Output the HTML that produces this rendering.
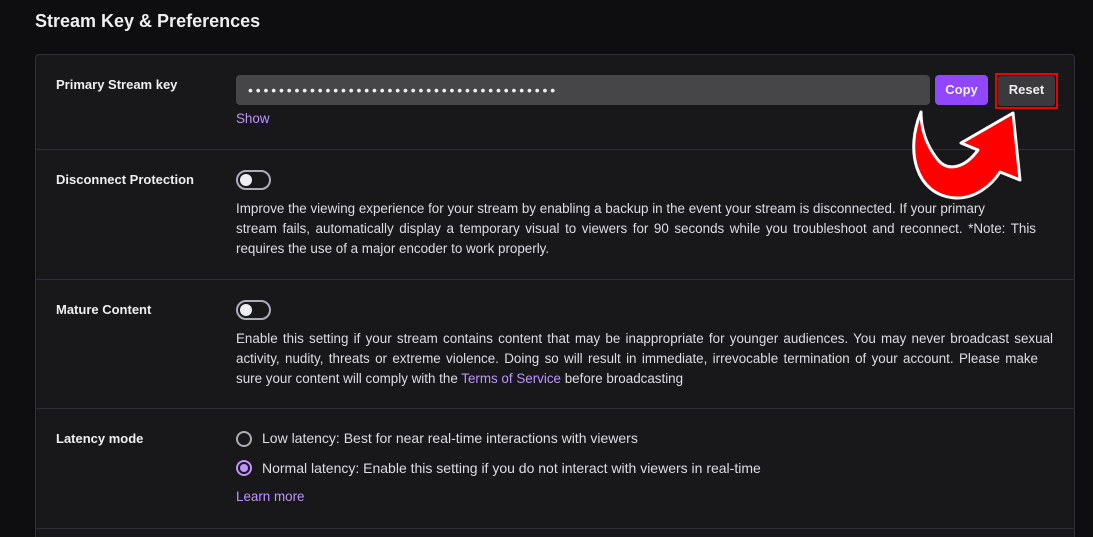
<!DOCTYPE html>
<html><head><style>
*{box-sizing:border-box;margin:0;padding:0}
html,body{width:1093px;height:537px;overflow:hidden}
body{background:#0e0e10;font-family:"Liberation Sans",sans-serif;color:#efeff1;position:relative}
h1{position:absolute;left:35px;top:11px;font-size:18px;font-weight:bold;color:#efeff1}
.panel{position:absolute;left:35px;top:54px;width:1040px;height:500px;background:#18181b;border:1px solid #2f2f35;border-radius:4px}
.sep{position:absolute;left:36px;width:1038px;height:1px;background:#2f2f35}
.lab{position:absolute;left:56px;font-size:13px;font-weight:bold}
.txt{position:absolute;left:236px;font-size:13.4px;line-height:20px;color:#dedee3;white-space:nowrap}
.j{display:block;text-align:justify;text-align-last:justify;white-space:normal}
a{color:#bf94ff;text-decoration:none}
.tog{position:absolute;left:236px;width:35px;height:20px;border:2px solid #adadb8;border-radius:10px}
.tog::after{content:"";position:absolute;left:2px;top:2px;width:12px;height:12px;border-radius:50%;background:#efeff1}
.radio{position:absolute;left:236px;width:16px;height:16px;border-radius:50%;border:2px solid #adadb8}
</style></head><body>
<h1>Stream Key &amp; Preferences</h1>
<div class="panel"></div>
<div class="sep" style="top:149px"></div>
<div class="sep" style="top:279px"></div>
<div class="sep" style="top:408px"></div>
<div class="sep" style="top:528px"></div>
<div class="lab" style="top:77px">Primary Stream key</div>
<div style="position:absolute;left:236px;top:75px;width:694px;height:30px;background:#464649;border-radius:4px;color:#efeff1;font-size:14px;line-height:30px;padding-left:12px;letter-spacing:2.85px;white-space:nowrap;overflow:hidden">••••••••••••••••••••••••••••••••••••••••</div>
<div style="position:absolute;left:935px;top:75px;width:53px;height:30px;background:#9147ff;border-radius:4px;font-size:13px;font-weight:bold;text-align:center;line-height:30px">Copy</div>
<div style="position:absolute;left:995px;top:73px;width:63px;height:36px;border:2px solid #e00;"></div>
<div style="position:absolute;left:998px;top:76px;width:57px;height:30px;background:#3a3a3d;border-radius:3px;font-size:13px;font-weight:bold;text-align:center;line-height:28px">Reset</div>
<div class="txt" style="top:109px"><a>Show</a></div>
<div class="lab" style="top:172px">Disconnect Protection</div>
<div class="tog" style="top:170px"></div>
<div class="txt" style="top:199px"><span class="j" style="width:749px">Improve the viewing experience for your stream by enabling a backup in the event your stream is disconnected. If your primary</span><span class="j" style="width:800px">stream fails, automatically display a temporary visual to viewers for 90 seconds while you troubleshoot and reconnect. *Note: This</span>requires the use of a major encoder to work properly.</div>
<div class="lab" style="top:302px">Mature Content</div>
<div class="tog" style="top:300px"></div>
<div class="txt" style="top:329px"><span class="j" style="width:817px">Enable this setting if your stream contains content that may be inappropriate for younger audiences. You may never broadcast sexual</span><span class="j" style="width:802px">activity, nudity, threats or extreme violence. Doing so will result in immediate, irrevocable termination of your account. Please make</span>sure your content will comply with the <a>Terms of Service</a> before broadcasting</div>
<div class="lab" style="top:431px">Latency mode</div>
<div class="radio" style="top:431px"></div>
<div class="txt" style="top:428px;left:262px;font-size:14px">Low latency: Best for near real-time interactions with viewers</div>
<div class="radio" style="top:460px;border-color:#bf94ff"><div style="position:absolute;left:2px;top:2px;width:8px;height:8px;border-radius:50%;background:#bf94ff"></div></div>
<div class="txt" style="top:458px;left:262px;font-size:14px">Normal latency: Enable this setting if you do not interact with viewers in real-time</div>
<div class="txt" style="top:487px;font-size:13.4px"><a>Learn more</a></div>
<svg style="position:absolute;left:0;top:0" width="1093" height="537"><path d="M921,112 C905,150 915,195 955,198 C975,199 992,185 1000,172 L1020,180 L1013,113 L961,143 L978,150 C965,168 948,172 938,160 C926,145 921,128 921,112 Z" fill="#f00" stroke="#fff" stroke-width="3" stroke-linejoin="round"/></svg>
</body></html>
